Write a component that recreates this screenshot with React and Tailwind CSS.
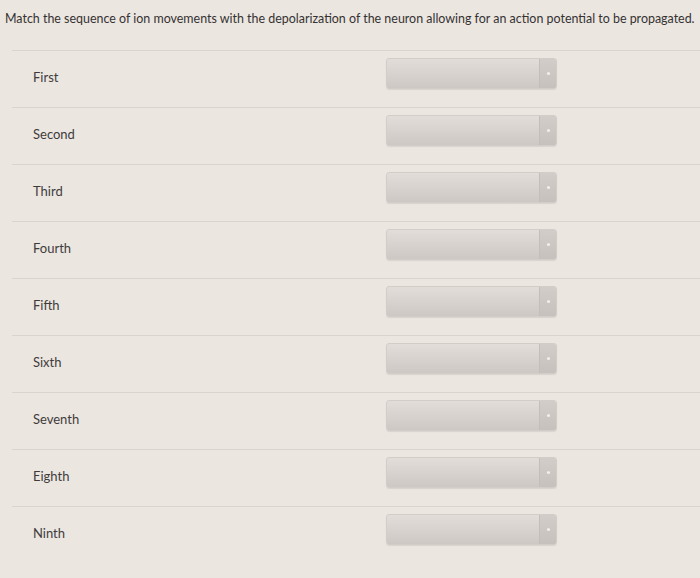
import React from 'react'

const rows = ['First', 'Second', 'Third', 'Fourth', 'Fifth', 'Sixth', 'Seventh', 'Eighth', 'Ninth']

const Dropdown = () => (
    <div className="mt-[7px] flex h-[31px] w-[171px] overflow-hidden rounded-[3px] border border-[#d3cdc8] bg-gradient-to-b from-[#e2ddd8] to-[#cdc8c3] shadow-[0_1px_1px_rgba(0,0,0,0.08)]">
        <div className="flex-1" />
        <div className="flex w-[17px] items-center justify-center border-l border-[#c4beb9] bg-gradient-to-b from-[#d2cdc8] to-[#c6c1bc]">
            <span className="block h-[3px] w-[3px] rounded-full bg-[#f2efec]" />
        </div>
    </div>
)

const App = () => {
    return (
        <div className="h-[578px] w-[700px] overflow-hidden bg-[#ece6e1] font-['Lato','Liberation_Sans',sans-serif] text-[#343231]">
            <div className="h-[50px] whitespace-nowrap pl-[5px] pt-[10px] text-[12.45px] leading-[18px]">
                Match the sequence of ion movements with the depolarization of the neuron allowing for an action potential to be propagated.
            </div>
            <div className="ml-[12px] flex flex-col">
                {rows.map((label) => (
                    <div key={label} className="flex h-[57px] items-start border-t border-[#dad4cf]">
                        <div className="w-[374px] pl-[21px] pt-[17px] text-[13px] leading-[18px] text-[#3e3c3b]">{label}</div>
                        <Dropdown />
                    </div>
                ))}
            </div>
        </div>
    )
}

export default App
